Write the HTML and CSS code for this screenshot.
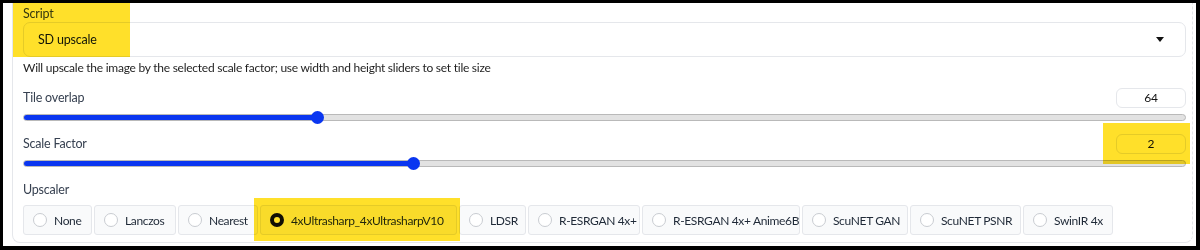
FILE: index.html
```html
<!DOCTYPE html>
<html>
<head>
<meta charset="utf-8">
<link rel="stylesheet" href="styles.css">
</head>
<body>
<div class="frame">
  <div class="panel">
    <div class="field">
      <div class="label script-label">Script</div>
      <div class="dropdown">
        <span class="dd-text">SD upscale</span>
        <span class="dd-arrow"></span>
      </div>
    </div>
    <div class="desc">Will upscale the image by the selected scale factor; use width and height sliders to set tile size</div>

    <div class="slider-block first">
      <div class="slider-head">
        <span class="label">Tile overlap</span>
        <span class="numbox">64</span>
      </div>
      <div class="slider">
        <div class="track"><div class="fill" style="width:25.3%"></div></div>
        <div class="thumb" style="left:25.3%"></div>
      </div>
    </div>

    <div class="slider-block second">
      <div class="slider-head">
        <span class="label">Scale Factor</span>
        <span class="numbox">2</span>
      </div>
      <div class="slider">
        <div class="track"><div class="fill" style="width:33.5%"></div></div>
        <div class="thumb" style="left:33.5%"></div>
      </div>
    </div>

    <div class="label up-label">Upscaler</div>
    <div class="options">
      <label class="opt w-none"><span class="radio"></span>None</label>
      <label class="opt w-lanczos"><span class="radio"></span>Lanczos</label>
      <label class="opt w-nearest"><span class="radio"></span>Nearest</label>
      <label class="opt w-ultra"><span class="radio checked"></span>4xUltrasharp_4xUltrasharpV10</label>
      <label class="opt w-ldsr"><span class="radio"></span>LDSR</label>
      <label class="opt w-resr"><span class="radio"></span>R-ESRGAN 4x+</label>
      <label class="opt w-anime"><span class="radio"></span>R-ESRGAN 4x+ Anime6B</label>
      <label class="opt w-gan"><span class="radio"></span>ScuNET GAN</label>
      <label class="opt w-psnr"><span class="radio"></span>ScuNET PSNR</label>
      <label class="opt w-swin"><span class="radio"></span>SwinIR 4x</label>
    </div>
  </div>
  <div class="hl hl-script"></div>
  <div class="hl hl-scale"></div>
  <div class="hl hl-ultra"></div>
</div>
</body>
</html>
```

FILE: styles.css
```css
* { box-sizing: border-box; }
html, body { margin: 0; padding: 0; }
body {
  width: 1200px;
  height: 250px;
  background: #000;
  font-family: "Lato", "Noto Sans", sans-serif;
  letter-spacing: -0.2px;
  color: #1f2937;
  overflow: hidden;
}
.frame {
  position: relative;
  margin: 3px 4px 0 3px;
  height: 243px;
  background: #fff;
  padding-left: 9px;
  padding-right: 3px;
}
.panel {
  height: 240px;
  border: 1px solid #e5e7eb;
  border-top: none;
  border-right: 1px dashed #e3e5e8;
  border-radius: 0 0 8px 8px;
  padding: 3px 6px 0 10px;
  display: flex;
  flex-direction: column;
}
.label {
  font-size: 12.5px;
  line-height: 16px;
  color: #374151;
}
.script-label { height: 16px; }
.dropdown {
  height: 35px;
  border: 1px solid #e5e7eb;
  border-radius: 7px;
  display: flex;
  align-items: center;
  justify-content: space-between;
  padding: 0 21px 0 14px;
}
.dd-text { font-size: 12.5px; color: #111827; }
.dd-arrow {
  width: 0; height: 0;
  border-left: 4px solid transparent;
  border-right: 4px solid transparent;
  border-top: 5px solid #111;
}
.desc {
  font-size: 12px;
  line-height: 16px;
  margin-top: 3px;
  color: #1f1f1f;
  letter-spacing: -0.25px;
}
.slider-block { display: flex; flex-direction: column; }
.slider-block.first { margin-top: 12px; }
.slider-block.second { margin-top: 8px; }
.slider-head {
  height: 20px;
  display: flex;
  justify-content: space-between;
  align-items: center;
}
.numbox {
  width: 70px;
  height: 20px;
  border: 1px solid #e5e7eb;
  border-radius: 6px;
  font-size: 12px;
  line-height: 18px;
  text-align: center;
  color: #111;
}
.slider {
  position: relative;
  height: 18px;
  display: flex;
  align-items: center;
}
.track {
  width: 100%;
  height: 7px;
  background: #e2e2e2;
  border: 1px solid #b9b9b9;
  border-radius: 4px;
  overflow: hidden;
}
.fill {
  height: 100%;
  background: #0a36f0;
}
.thumb {
  position: absolute;
  top: 3px;
  width: 13px;
  height: 13px;
  margin-left: -6px;
  border-radius: 50%;
  background: #0a36f0;
}
.up-label { margin-top: 10px; }
.options {
  margin-top: 7px;
  display: flex;
  gap: 2px;
}
.opt {
  height: 30px;
  display: flex;
  align-items: center;
  gap: 7px;
  padding: 0 9px;
  background: #f9fafb;
  border: 1px solid #e5e7eb;
  border-radius: 3px;
  font-size: 12px;
  letter-spacing: -0.35px;
  color: #1f2937;
  white-space: nowrap;
}
.radio {
  width: 14px;
  height: 14px;
  border-radius: 50%;
  border: 1px solid #c9ccd1;
  background: #fff;
  flex: none;
}
.radio.checked {
  border: 4px solid #111;
  background: #fff;
}
.w-none { width: 69px; }
.w-lanczos { width: 82px; }
.w-nearest { width: 80px; }
.w-ultra { width: 197px; }
.w-ldsr { width: 67px; }
.w-resr { width: 112px; }
.w-anime { width: 158px; }
.w-gan { width: 106px; }
.w-psnr { width: 111px; }
.w-swin { width: 90px; }

.hl {
  position: absolute;
  background: #ffe02a;
  mix-blend-mode: multiply;
}
.hl-script { left: 10px; top: 0; width: 117px; height: 54px; }
.hl-scale { left: 1100px; top: 120px; width: 87px; height: 41px; }
.hl-ultra { left: 251px; top: 195px; width: 206px; height: 43px; }
```
